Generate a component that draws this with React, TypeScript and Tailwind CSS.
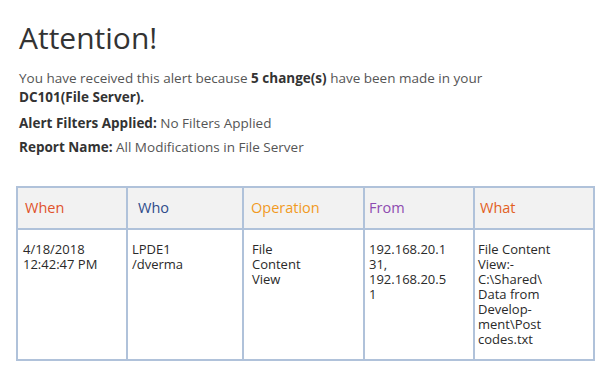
import React from "react";

const headers = [
  { label: "When", color: "text-[#e0522c]", w: "w-[110px]", pad: "pl-[7px]" },
  { label: "Who", color: "text-[#2f4c8a]", w: "w-[116px]", pad: "pl-[10px]" },
  { label: "Operation", color: "text-[#f19a1f]", w: "w-[121px]", pad: "pl-[7px]" },
  { label: "From", color: "text-[#8e4bb0]", w: "w-[110px]", pad: "pl-[4px]" },
  { label: "What", color: "text-[#e2601f]", w: "w-[120px]", pad: "pl-[5px]" },
];

const cells = [
  { lines: ["4/18/2018", "12:42:47 PM"], pad: "pl-[5px]" },
  { lines: ["LPDE1", "/dverma"], pad: "pl-[4px]" },
  { lines: ["File", "Content", "View"], pad: "pl-[8px]" },
  { lines: ["192.168.20.1", "31,", "192.168.20.5", "1"], pad: "pl-[4px]" },
  { lines: ["File Content", "View:-", "C:\\Shared\\", "Data from", "Develop-", "ment\\Post", "codes.txt"], pad: "pl-[3px]" },
];

export default function App() {
  return (
    <div className="w-[612px] h-[382px] bg-white overflow-hidden font-['Open_Sans',sans-serif] text-[#333]">
      <div className="pl-[19px] pt-[18px]">
        <h1 className="text-[30px] leading-[40px] font-normal text-[#333]">Attention!</h1>
        <p className="mt-[11px] text-[13.5px] leading-[19px] text-[#555] max-w-[480px]">
          You have received this alert because <b className="font-bold text-[#333]">5 change(s)</b> have been made in your{" "}
          <b className="font-bold text-[#333]">DC101(File Server).</b>
        </p>
        <p className="mt-[7px] text-[13.5px] leading-[19px] text-[#555]">
          <b className="font-bold text-[#333]">Alert Filters Applied:</b> No Filters Applied
        </p>
        <p className="mt-[5px] text-[13.5px] leading-[19px] text-[#555]">
          <b className="font-bold text-[#333]">Report Name:</b> All Modifications in File Server
        </p>
      </div>
      <table className="ml-[16px] mt-[29px] border-collapse border-2 border-[#b0c2da]">
        <thead>
          <tr className="bg-[#f2f2f2] h-[42px]">
            {headers.map((h) => (
              <th
                key={h.label}
                className={`${h.w} ${h.pad} ${h.color} border-2 border-[#b0c2da] text-left text-[14.5px] font-normal align-middle`}
              >
                {h.label}
              </th>
            ))}
          </tr>
        </thead>
        <tbody>
          <tr className="h-[131px]">
            {cells.map((c, i) => (
              <td
                key={i}
                className={`${c.pad} pt-[12px] border-2 border-[#b0c2da] align-top text-[13px] leading-[15px] text-[#2a2a2a]`}
              >
                {c.lines.map((l, j) => (
                  <div key={j}>{l}</div>
                ))}
              </td>
            ))}
          </tr>
        </tbody>
      </table>
    </div>
  );
}
